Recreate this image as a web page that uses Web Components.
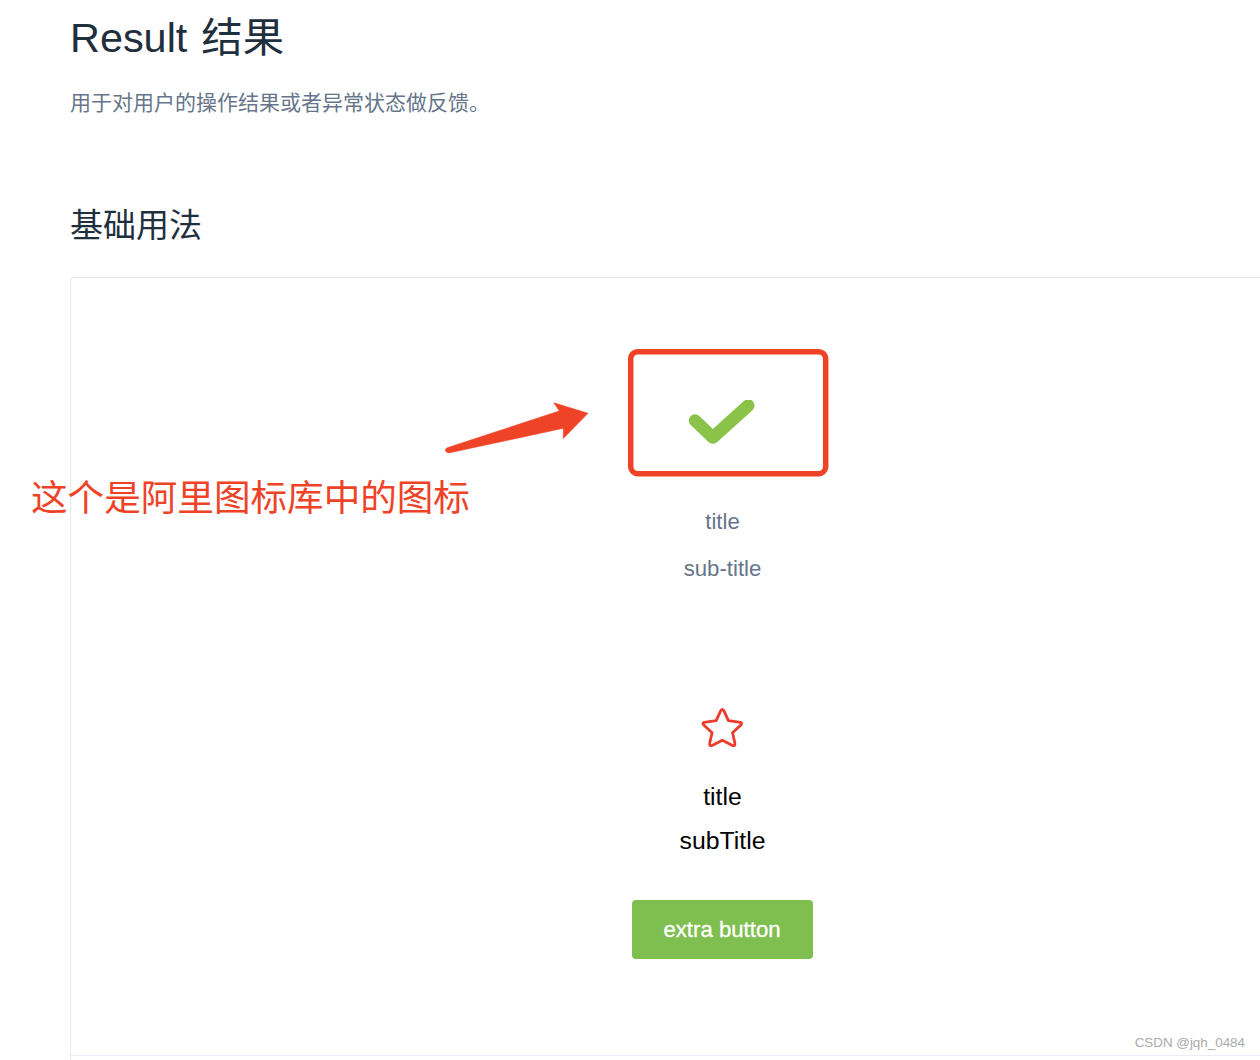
<!DOCTYPE html>
<html lang="zh">
<head>
<meta charset="utf-8">
<title>Result 结果</title>
<style>
  html, body { margin: 0; padding: 0; background: #fff; }
  body {
    width: 1260px;
    height: 1060px;
    overflow: hidden;
    position: relative;
    font-family: "Liberation Sans", "Noto Sans CJK SC", sans-serif;
  }
</style>
</head>
<body>
<doc-page>
  <doc-heading level="1" slot="head">Result 结果</doc-heading>
  <doc-lead slot="head">用于对用户的操作结果或者异常状态做反馈。</doc-lead>
  <doc-heading level="2" slot="head">基础用法</doc-heading>
  <demo-card>
    <result-view kind="plain">
      <check-icon slot="icon"></check-icon>
      <span slot="title">title</span>
      <span slot="subtitle">sub-title</span>
    </result-view>
    <result-view kind="custom">
      <star-icon slot="icon"></star-icon>
      <span slot="title">title</span>
      <span slot="subtitle">subTitle</span>
      <extra-button slot="extra">extra button</extra-button>
    </result-view>
  </demo-card>
</doc-page>
<note-overlay text="这个是阿里图标库中的图标"></note-overlay>
<water-mark>CSDN @jqh_0484</water-mark>

<script>
class DocPage extends HTMLElement {
  constructor() {
    super();
    this.attachShadow({ mode: 'open' });
    this.shadowRoot.innerHTML = `
      <style>
        :host { display: block; box-sizing: border-box; padding: 15px 0 0 70px; width: 1260px; }
      </style>
      <slot name="head"></slot>
      <slot></slot>
    `;
  }
}

class DocHeading extends HTMLElement {
  constructor() {
    super();
    this.attachShadow({ mode: 'open' });
    const big = this.getAttribute('level') === '1';
    this.shadowRoot.innerHTML = `
      <style>
        :host { display: block; color: #1f2f3d; font-weight: 400; }
        div {
          font-size: ${big ? '41.4px' : '33px'};
          line-height: ${big ? '46px' : '40px'};
          word-spacing: ${big ? '2.5px' : '0'};
          margin-bottom: ${big ? '0' : '31px'};
        }
      </style>
      <div><slot></slot></div>
    `;
  }
}

class DocLead extends HTMLElement {
  constructor() {
    super();
    this.attachShadow({ mode: 'open' });
    this.shadowRoot.innerHTML = `
      <style>
        :host {
          display: block;
          color: #66758a;
          font-size: 21px;
          line-height: 30px;
          margin: 27px 0 88px;
        }
      </style>
      <slot></slot>
    `;
  }
}

// right edge runs off the screen in the shot, so no right border here
class DemoCard extends HTMLElement {
  constructor() {
    super();
    this.attachShadow({ mode: 'open' });
    this.shadowRoot.innerHTML = `
      <style>
        :host {
          display: flex;
          flex-direction: column;
          box-sizing: border-box;
          width: 1190px;
          height: 783px;
          border: 1px solid #ebebeb;
          border-width: 1px 0 0 1px;
          border-radius: 4px 0 0 0;
        }
        .foot { margin-top: auto; height: 4px; border-top: 1px solid #eaeefb; }
      </style>
      <slot></slot>
      <div class="foot"></div>
    `;
  }
}

class ResultView extends HTMLElement {
  constructor() {
    super();
    this.attachShadow({ mode: 'open' });
    const custom = this.getAttribute('kind') === 'custom';
    this.shadowRoot.innerHTML = `
      <style>
        :host {
          display: block;
          padding-left: 451px;
          padding-top: ${custom ? '123px' : '96px'};
          color: ${custom ? '#000' : '#66758a'};
          font-size: ${custom ? '24.8px' : '22.2px'};
        }
        .col { display: flex; flex-direction: column; align-items: center; width: 400px; }
        .icon { display: flex; height: ${custom ? '42px' : '100px'}; align-items: center; }
        .title { line-height: 30px; margin-top: 33px; padding-left: 1px; }
        .sub { line-height: 30px; margin-top: ${custom ? '14px' : '17px'}; padding-left: 1px; }
        .extra { margin-top: 44px; }
      </style>
      <div class="col">
        <div class="icon"><slot name="icon"></slot></div>
        <div class="title"><slot name="title"></slot></div>
        <div class="sub"><slot name="subtitle"></slot></div>
        ${custom ? '<div class="extra"><slot name="extra"></slot></div>' : ''}
      </div>
    `;
  }
}

class CheckIcon extends HTMLElement {
  constructor() {
    super();
    this.attachShadow({ mode: 'open' });
    this.shadowRoot.innerHTML = `
      <style>:host { display: block; width: 68px; height: 48px; } svg { display: block; }</style>
      <svg width="68" height="48" viewBox="0 0 68 48">
        <path d="M7 20.5 L24.8 37.5 L60.3 5.5" fill="none" stroke="#8bc34a" stroke-width="12.5" stroke-linecap="round" stroke-linejoin="round"/>
      </svg>
    `;
  }
}

class StarIcon extends HTMLElement {
  constructor() {
    super();
    this.attachShadow({ mode: 'open' });
    this.shadowRoot.innerHTML = `
      <style>:host { display: block; width: 44px; height: 42px; } svg { display: block; }</style>
      <svg width="44" height="42" viewBox="0 0 44 42">
        <path d="M16.2 13.6 L20.5 4.1 Q22.3 0.6 24.1 4.1 L28.4 13.6 L39 15.1 Q43.4 15.6 40.6 18.3 L32.5 25.8 L34.8 35.6 Q35.6 39.8 32 38.2 L22.3 33.2 L12.6 38.2 Q9 39.8 9.8 35.6 L12.1 25.8 L4 18.3 Q1.2 15.6 5.6 15.1 Z" fill="none" stroke="#ee3a2a" stroke-width="2.8" stroke-linejoin="round"/>
      </svg>
    `;
  }
}

class ExtraButton extends HTMLElement {
  constructor() {
    super();
    this.attachShadow({ mode: 'open' });
    this.shadowRoot.innerHTML = `
      <style>
        :host { display: block; }
        button {
          display: block;
          width: 181px;
          height: 59px;
          padding: 0;
          border: none;
          border-radius: 4px;
          background: #7fbf4f;
          color: #fff;
          font: 400 22.2px "Liberation Sans", sans-serif;
          -webkit-text-stroke: 0.3px #fff;
          cursor: pointer;
        }
      </style>
      <button><slot></slot></button>
    `;
  }
}

// hand-drawn markup from the screenshot, sits over the page
class NoteOverlay extends HTMLElement {
  constructor() {
    super();
    this.attachShadow({ mode: 'open' });
    const text = this.getAttribute('text') || '';
    this.shadowRoot.innerHTML = `
      <style>
        :host { position: absolute; left: 0; top: 0; width: 1260px; height: 1060px; pointer-events: none; display: block; }
        svg { position: absolute; left: 0; top: 0; }
        .label {
          position: absolute;
          left: 31px;
          top: 478px;
          font-size: 36.6px;
          font-weight: 400;
          line-height: 42px;
          color: #ee4327;
          white-space: nowrap;
        }
      </style>
      <svg width="1260" height="1060" viewBox="0 0 1260 1060">
        <rect x="630.7" y="351.7" width="195" height="122" rx="7" fill="none" stroke="#ee4327" stroke-width="5.5"/>
        <path d="M446.5 448 L559.3 411 L553.8 402.8 L588 413.3 L563.3 438.5 L563.3 428.3 L448.5 453 Q443.6 451.5 446.5 448 Z" fill="#ee4327" stroke="#ee4327" stroke-width="0.6" stroke-linejoin="round"/>
      </svg>
      <div class="label">${text}</div>
    `;
  }
}

class WaterMark extends HTMLElement {
  constructor() {
    super();
    this.attachShadow({ mode: 'open' });
    this.shadowRoot.innerHTML = `
      <style>
        :host {
          position: absolute;
          right: 15px;
          top: 1035px;
          font-size: 13.4px;
          line-height: 16px;
          color: #aaa;
        }
      </style>
      <slot></slot>
    `;
  }
}

customElements.define('doc-page', DocPage);
customElements.define('doc-heading', DocHeading);
customElements.define('doc-lead', DocLead);
customElements.define('demo-card', DemoCard);
customElements.define('result-view', ResultView);
customElements.define('check-icon', CheckIcon);
customElements.define('star-icon', StarIcon);
customElements.define('extra-button', ExtraButton);
customElements.define('note-overlay', NoteOverlay);
customElements.define('water-mark', WaterMark);
</script>
</body>
</html>
